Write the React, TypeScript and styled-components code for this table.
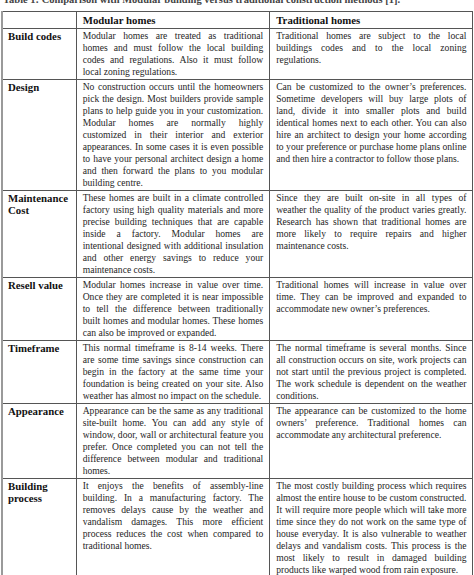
import styled, { createGlobalStyle } from "styled-components";

const GlobalStyle = createGlobalStyle`
  html, body {
    margin: 0;
    padding: 0;
    background: #ffffff;
  }
`;

type Row = {
  label: string[];
  modular: string;
  traditional: string;
};

const rows: Row[] = [
  {
    label: ["Build codes"],
    modular:
      "Modular homes are treated as traditional homes and must follow the local building codes and regulations. Also it must follow local zoning regulations.",
    traditional:
      "Traditional homes are subject to the local buildings codes and to the local zoning regulations.",
  },
  {
    label: ["Design"],
    modular:
      "No construction occurs until the homeowners pick the design. Most builders provide sample plans to help guide you in your customization. Modular homes are normally highly customized in their interior and exterior appearances. In some cases it is even possible to have your personal architect design a home and then forward the plans to you modular building centre.",
    traditional:
      "Can be customized to the owner\u2019s preferences. Sometime developers will buy large plots of land, divide it into smaller plots and build identical homes next to each other. You can also hire an architect to design your home according to your preference or purchase home plans online and then hire a contractor to follow those plans.",
  },
  {
    label: ["Maintenance", "Cost"],
    modular:
      "These homes are built in a climate controlled factory using high quality materials and more precise building techniques that are capable inside a factory. Modular homes are intentional designed with additional insulation and other energy savings to reduce your maintenance costs.",
    traditional:
      "Since they are built on-site in all types of weather the quality of the product varies greatly. Research has shown that traditional homes are more likely to require repairs and higher maintenance costs.",
  },
  {
    label: ["Resell value"],
    modular:
      "Modular homes increase in value over time. Once they are completed it is near impossible to tell the difference between traditionally built homes and modular homes. These homes can also be improved or expanded.",
    traditional:
      "Traditional homes will increase in value over time. They can be improved and expanded to accommodate new owner\u2019s preferences.",
  },
  {
    label: ["Timeframe"],
    modular:
      "This normal timeframe is 8-14 weeks. There are some time savings since construction can begin in the factory at the same time your foundation is being created on your site. Also weather has almost no impact on the schedule.",
    traditional:
      "The normal timeframe is several months. Since all construction occurs on site, work projects can not start until the previous project is completed. The work schedule is dependent on the weather conditions.",
  },
  {
    label: ["Appearance"],
    modular:
      "Appearance can be the same as any traditional site-built home. You can add any style of window, door, wall or architectural feature you prefer. Once completed you can not tell the difference between modular and traditional homes.",
    traditional:
      "The appearance can be customized to the home owners\u2019 preference. Traditional homes can accommodate any architectural preference.",
  },
  {
    label: ["Building", "process"],
    modular:
      "It enjoys the benefits of assembly-line building. In a manufacturing factory. The removes delays cause by the weather and vandalism damages. This more efficient process reduces the cost when compared to traditional homes.",
    traditional:
      "The most costly building process which requires almost the entire house to be custom constructed. It will require more people which will take more time since they do not work on the same type of house everyday. It is also vulnerable to weather delays and vandalism costs. This process is the most likely to result in damaged building products like warped wood from rain exposure.",
  },
];

export default function App() {
  return (
    <>
      <GlobalStyle />
      <Page>
        <Caption>
          Table 1: Comparison with Modular building versus traditional construction methods [1].
        </Caption>
        <Table>
          <colgroup>
            <col style={{ width: 74.2 }} />
            <col style={{ width: 193.5 }} />
            <col style={{ width: 203.3 }} />
          </colgroup>
          <thead>
            <tr>
              <HeadCell />
              <HeadCell>Modular homes</HeadCell>
              <HeadCell>Traditional homes</HeadCell>
            </tr>
          </thead>
          <tbody>
            {rows.map((row) => (
              <tr key={row.label.join(" ")}>
                <LabelCell>
                  {row.label.map((part) => (
                    <div key={part}>{part}</div>
                  ))}
                </LabelCell>
                <BodyCell>{row.modular}</BodyCell>
                <BodyCell>{row.traditional}</BodyCell>
              </tr>
            ))}
          </tbody>
        </Table>
      </Page>
    </>
  );
}

const serif = `"Liberation Serif", "Times New Roman", serif`;

const Page = styled.div`
  width: 474px;
  height: 575px;
  overflow: hidden;
  box-sizing: border-box;
  padding-left: 1px;
  font-family: ${serif};
  color: #1c1c1c;
  background: #ffffff;
`;

const Caption = styled.div`
  margin-top: -6px;
  height: 11px;
  font-family: ${serif};
  font-size: 10.5px;
  line-height: 11px;
  font-weight: bold;
  color: #444;
  white-space: nowrap;
  padding-left: 2px;
  margin-bottom: 6px;
`;

const Table = styled.table`
  width: 471px;
  border-collapse: collapse;
  table-layout: fixed;
  font-family: ${serif};
  border-left: 2px solid #9a9a9a;
  border-right: 1px solid #555;
  border-top: 1px solid #555;
`;

const HeadCell = styled.th`
  border: 1px solid #555;
  padding: 2px 6px 2px;
  text-align: left;
  font-family: ${serif};
  font-size: 10.8px;
  line-height: 12px;
  font-weight: bold;
  color: #111;
`;

const LabelCell = styled.td`
  border: 1px solid #555;
  border-left: none;
  vertical-align: top;
  padding: 1px 4px 1px 5px;
  font-family: ${serif};
  font-size: 10.8px;
  line-height: 12px;
  font-weight: bold;
  color: #111;
  white-space: nowrap;
`;

const BodyCell = styled.td`
  border: 1px solid #555;
  vertical-align: top;
  padding: 1px 6px 1px;
  font-family: ${serif};
  font-size: 9.6px;
  line-height: 12px;
  text-align: justify;
  color: #262626;
`;
